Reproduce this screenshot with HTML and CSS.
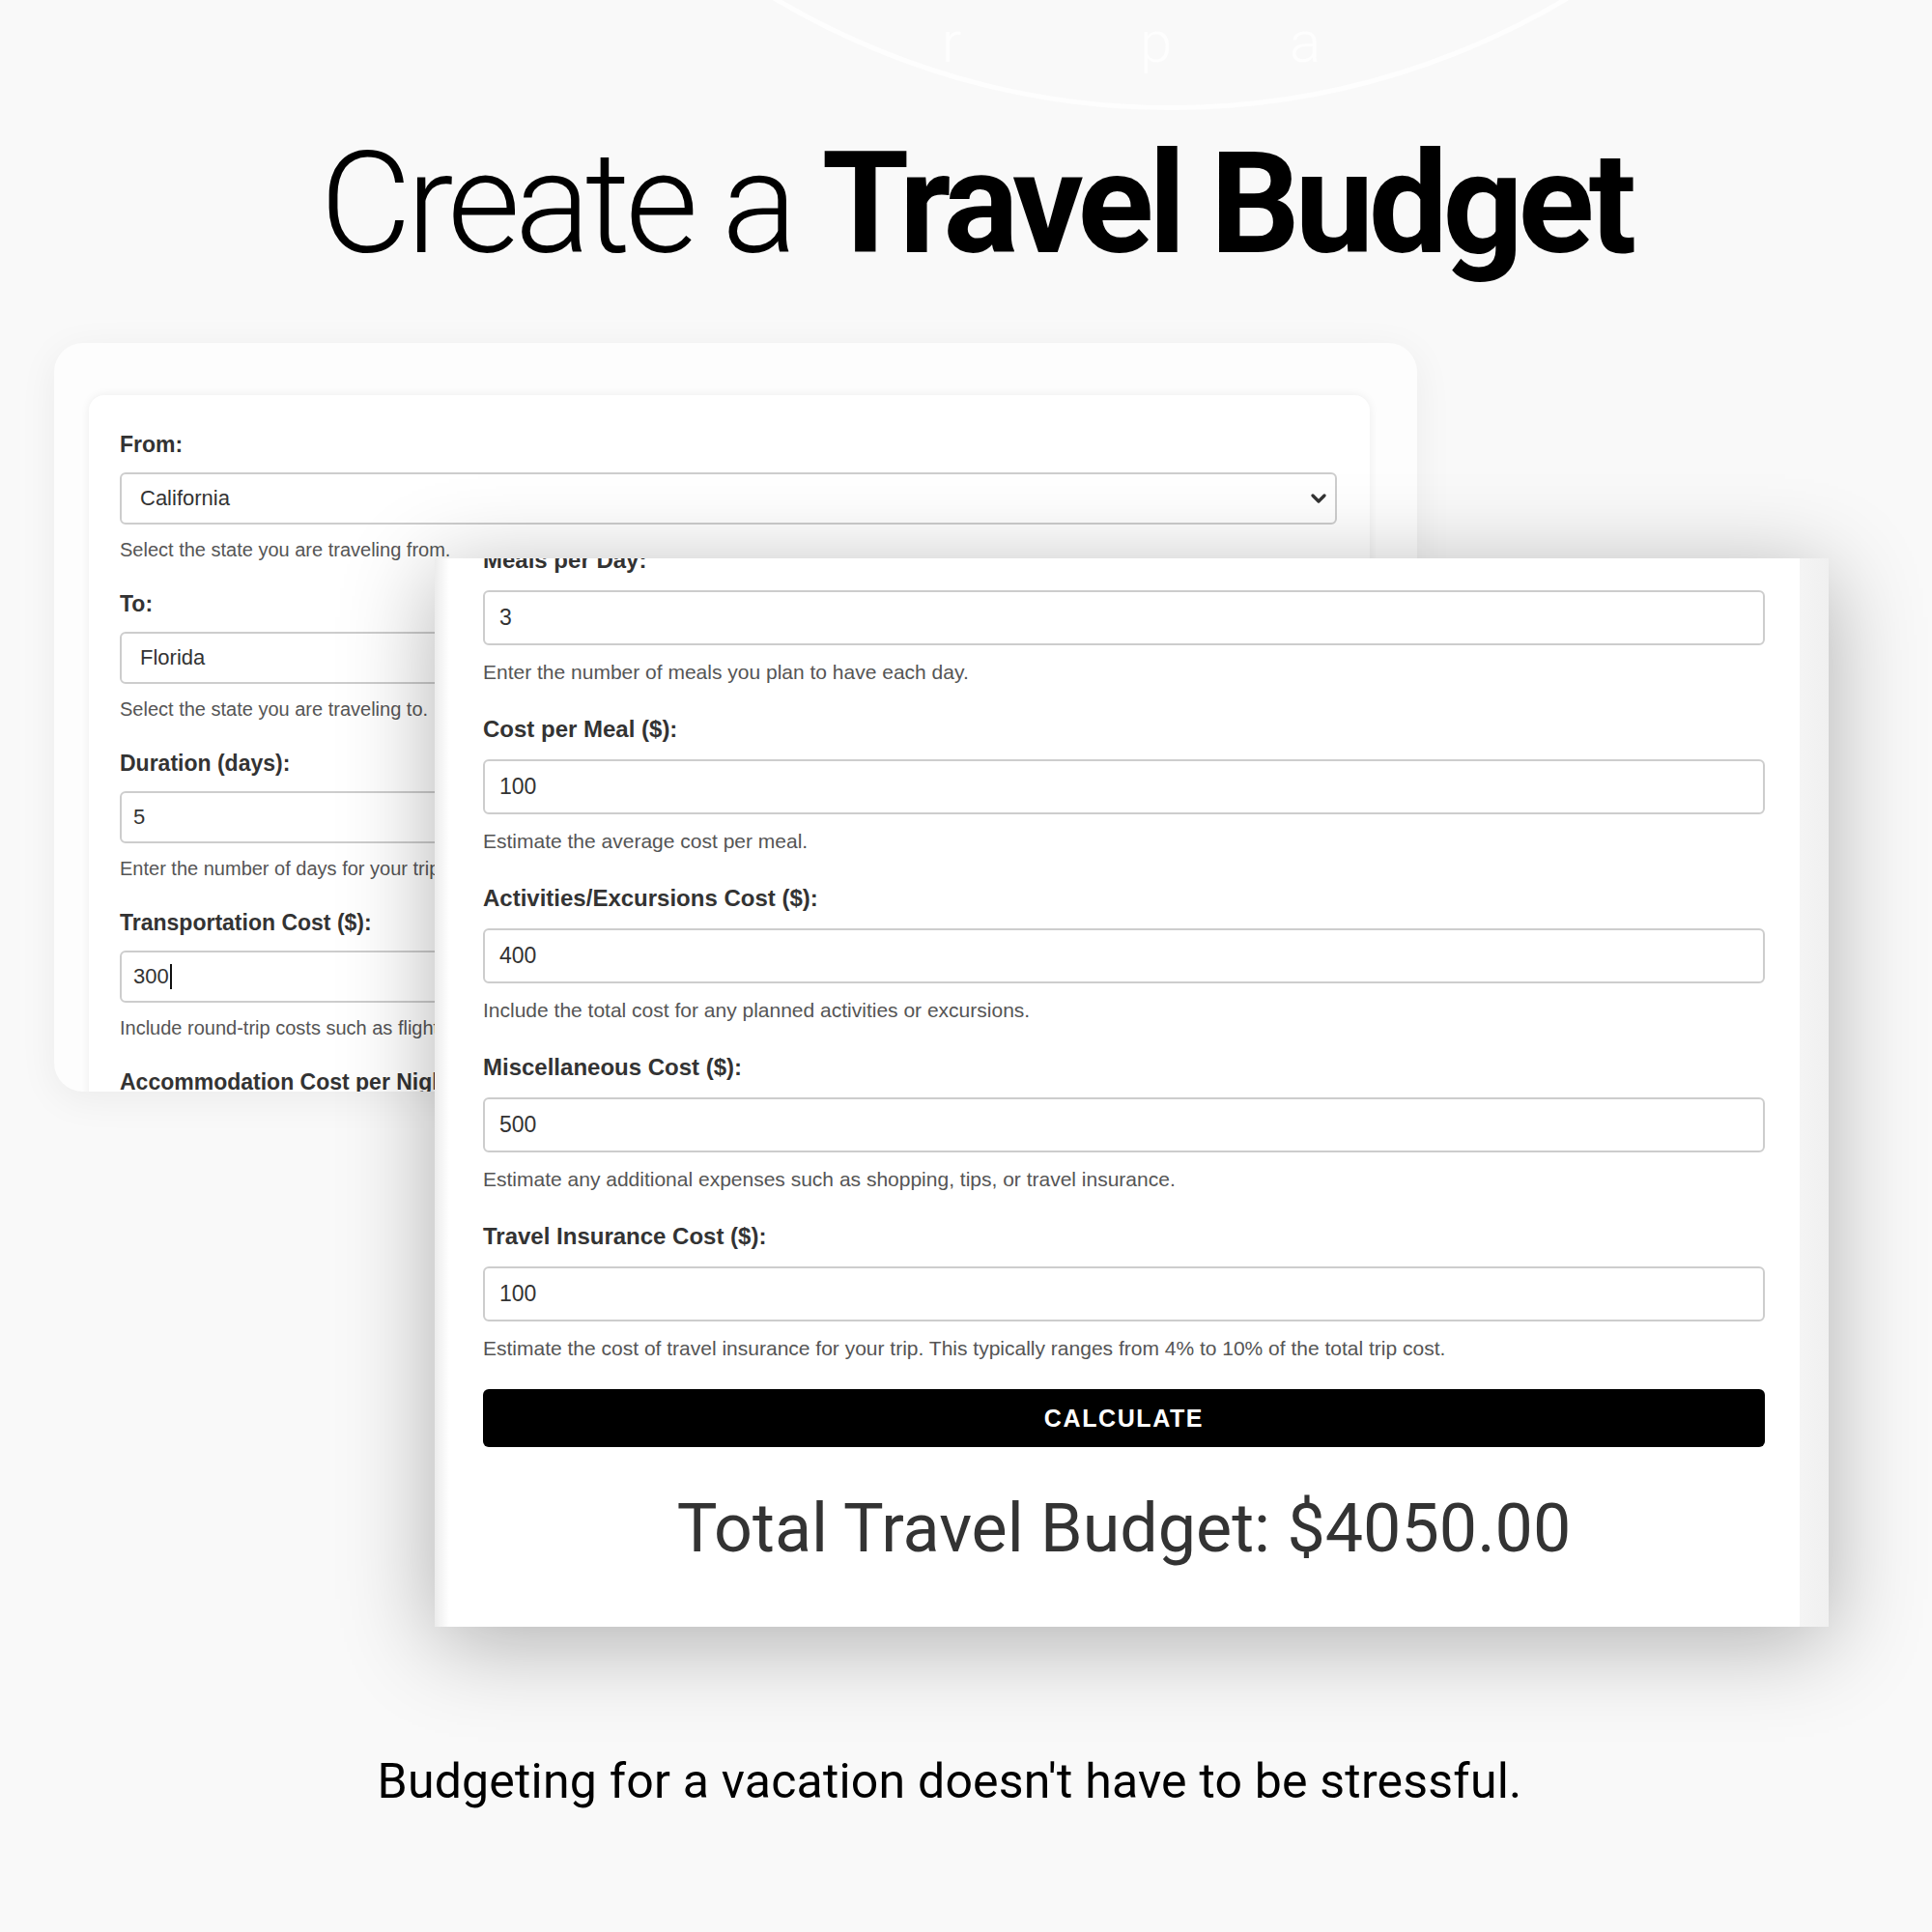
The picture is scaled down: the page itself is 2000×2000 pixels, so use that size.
FILE: index.html
```html
<!DOCTYPE html>
<html lang="en">
<head>
    <meta charset="UTF-8">
    <meta name="viewport" content="width=device-width, initial-scale=1.0">
    <title>Create a Travel Budget</title>
    <link rel="stylesheet" href="styles.css">
</head>
<body>

<div class="watermark">
    <div class="wm-ring"></div>
    <span class="wm-letter wm-1">r</span>
    <span class="wm-letter wm-2">p</span>
    <span class="wm-letter wm-3">a</span>
</div>

<h1 class="title"><span class="title-light">Create a</span> <span class="title-bold">Travel Budget</span></h1>

<div class="stage">
    <!-- first screenshot: top of the form -->
    <div class="shot shot-back">
        <div class="form-card">
            <div class="group">
                <label>From:</label>
                <div class="input select">California
                    <svg class="chevron" width="16" height="10" viewBox="0 0 16 10"><path d="M2 2 L8 8 L14 2" fill="none" stroke="#333" stroke-width="3.2" stroke-linecap="round" stroke-linejoin="round"/></svg>
                </div>
                <p class="hint">Select the state you are traveling from.</p>
            </div>
            <div class="group">
                <label>To:</label>
                <div class="input select">Florida</div>
                <p class="hint">Select the state you are traveling to.</p>
            </div>
            <div class="group">
                <label>Duration (days):</label>
                <div class="input">5</div>
                <p class="hint">Enter the number of days for your trip.</p>
            </div>
            <div class="group">
                <label>Transportation Cost ($):</label>
                <div class="input">300<span class="caret"></span></div>
                <p class="hint">Include round-trip costs such as flights, trains, or car rentals.</p>
            </div>
            <div class="group">
                <label>Accommodation Cost per Night ($):</label>
            </div>
        </div>
    </div>

    <!-- second screenshot: bottom of the form with the result -->
    <div class="shot shot-front">
        <div class="front-form">
            <div class="group">
                <label>Meals per Day:</label>
                <div class="input">3</div>
                <p class="hint">Enter the number of meals you plan to have each day.</p>
            </div>
            <div class="group">
                <label>Cost per Meal ($):</label>
                <div class="input">100</div>
                <p class="hint">Estimate the average cost per meal.</p>
            </div>
            <div class="group">
                <label>Activities/Excursions Cost ($):</label>
                <div class="input">400</div>
                <p class="hint">Include the total cost for any planned activities or excursions.</p>
            </div>
            <div class="group">
                <label>Miscellaneous Cost ($):</label>
                <div class="input">500</div>
                <p class="hint">Estimate any additional expenses such as shopping, tips, or travel insurance.</p>
            </div>
            <div class="group last">
                <label>Travel Insurance Cost ($):</label>
                <div class="input">100</div>
                <p class="hint">Estimate the cost of travel insurance for your trip. This typically ranges from 4% to 10% of the total trip cost.</p>
            </div>
            <button class="calc-btn">CALCULATE</button>
            <div class="total">Total Travel Budget: $4050.00</div>
        </div>
    </div>
</div>

<p class="tagline">Budgeting for a vacation doesn't have to be stressful.</p>

</body>
</html>
```

FILE: styles.css
```css
* {
    box-sizing: border-box;
}
body {
    margin: 0;
    width: 2000px;
    height: 2000px;
    background: #f9f9f9;
    position: relative;
    overflow: hidden;
    font-family: "Roboto", "Liberation Sans", sans-serif;
    color: #000;
}

/* faint logo behind the title */
.watermark {
    position: absolute;
    left: 0;
    top: 0;
    width: 2000px;
    height: 130px;
    overflow: hidden;
}
.wm-ring {
    position: absolute;
    left: 410px;
    top: -1490px;
    width: 1604px;
    height: 1604px;
    border: 5px solid #fefefe;
    border-radius: 50%;
}
.wm-letter {
    position: absolute;
    top: 8px;
    font-family: "Roboto", sans-serif;
    font-weight: 300;
    font-size: 60px;
    line-height: 1.2;
    color: #fefefe;
}
.wm-1 { left: 975px; }
.wm-2 { left: 1180px; }
.wm-3 { left: 1335px; }

.title {
    margin: 137px 0 0;
    padding-left: 20px;
    font-size: 146px;
    line-height: 150px;
    text-align: center;
    letter-spacing: -5.5px;
    font-weight: 400;
}
.title-light {
    font-weight: 300;
}
.title-bold {
    font-weight: 700;
}

.stage {
    position: relative;
    height: 1329px;
    margin-top: 68px;
}
.shot {
    position: absolute;
    overflow: hidden;
    font-family: "Liberation Sans", Arial, sans-serif;
    color: #333;
}
.shot-back {
    left: 56px;
    top: 0;
    width: 1411px;
    height: 775px;
    background: #fdfdfd;
    border-radius: 30px;
    box-shadow: 0 8px 40px rgba(0, 0, 0, 0.06);
}
.shot-front {
    left: 450px;
    top: 223px;
    width: 1443px;
    height: 1106px;
    background: linear-gradient(to right, #ececec 0, #fff 15px, #fff 1413px, #f4f4f4 1413px, #f0f0f0 100%);
    box-shadow: 0 16px 90px rgba(0, 0, 0, 0.3);
}

.form-card {
    margin: 54px 0 0 36px;
    width: 1326px;
    height: 900px;
    padding: 38px 34px 0 32px;
    background: #fff;
    border-radius: 16px;
    box-shadow: 0 0 10px rgba(0, 0, 0, 0.07);
}

.group label {
    display: block;
    font-weight: 700;
}
.input {
    display: flex;
    align-items: center;
    border: 2px solid #cdcdcd;
    border-radius: 6px;
    background: #fff;
    color: #333;
}
.hint {
    margin: 0;
    color: #555;
}

/* back screenshot sizes */
.shot-back .group label {
    font-size: 23px;
    line-height: 26px;
    margin-bottom: 16px;
}
.shot-back .input {
    height: 54px;
    padding: 0 12px;
    font-size: 22px;
}
.shot-back .select {
    padding: 0 9px 0 19px;
    justify-content: space-between;
}
.shot-back .hint {
    font-size: 20px;
    line-height: 22px;
    margin: 15px 0 32px;
}
.caret {
    display: inline-block;
    width: 2px;
    height: 26px;
    margin-left: 1px;
    background: #111;
}

/* front screenshot sizes */
.front-form {
    margin-top: -12px;
    padding: 0 66px 0 50px;
}
.shot-front .group label {
    font-size: 24px;
    line-height: 28px;
    margin-bottom: 17px;
}
.shot-front .input {
    height: 57px;
    padding: 0 15px;
    font-size: 23px;
}
.shot-front .hint {
    font-size: 21px;
    line-height: 24px;
    margin: 16px 0 33px;
}
.shot-front .group.last .hint {
    margin-bottom: 30px;
}
.calc-btn {
    display: block;
    width: 100%;
    height: 60px;
    border: none;
    border-radius: 6px;
    background: #000;
    color: #fff;
    font-family: "Liberation Sans", Arial, sans-serif;
    font-weight: 700;
    font-size: 25px;
    letter-spacing: 1.6px;
}
.total {
    margin-top: 49px;
    font-family: "Roboto", sans-serif;
    font-size: 70px;
    line-height: 70px;
    text-align: center;
    color: #333;
}

.tagline {
    margin: 136px 0 0;
    padding-right: 34px;
    font-family: "Roboto", sans-serif;
    font-size: 50px;
    line-height: 49px;
    letter-spacing: 0.2px;
    text-align: center;
    color: #000;
}
```
